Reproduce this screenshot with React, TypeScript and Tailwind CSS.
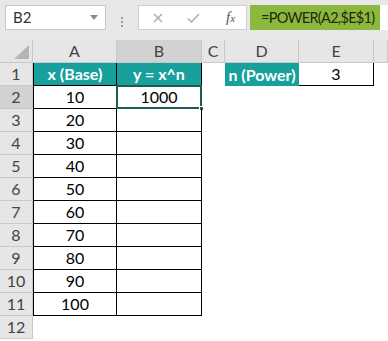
import type { ReactNode } from 'react'

const cols = ['A', 'B', 'C', 'D', 'E', '']
const values = ['10', '20', '30', '40', '50', '60', '70', '80', '90', '100']

function HeadCell({ children, active }: { children?: ReactNode; active?: boolean }) {
  return (
    <div
      className={`flex items-center justify-center border-r border-b border-[#c9c9c9] text-[16px] text-[#444] ${
        active ? 'bg-[#d2d2d2]' : 'bg-[#e6e6e6]'
      }`}
    >
      {children}
    </div>
  )
}

function RowHead({ n, active }: { n: number; active?: boolean }) {
  return (
    <div
      className={`flex items-center justify-center border-r border-b border-[#c9c9c9] text-[16px] text-[#444] ${
        active ? 'bg-[#d2d2d2]' : 'bg-[#e6e6e6]'
      }`}
    >
      {n}
    </div>
  )
}

function FormulaBar() {
  return (
    <div className="flex h-[40px] bg-[#e8e8e8] pt-[5px]">
      <div className="ml-[5px] flex h-[25px] w-[101px] items-center justify-between border border-[#c6c6c6] bg-white pl-[7px] pr-[7px] text-[15px] text-[#333]">
        <span>B2</span>
        <svg width="8" height="5" viewBox="0 0 8 5">
          <path d="M0 0h8L4 5z" fill="#8a8a8a" />
        </svg>
      </div>
      <div className="flex w-[32px] flex-col items-center justify-center gap-[2px] pb-[2px]">
        <span className="h-[2px] w-[2px] bg-[#9a9a9a]" />
        <span className="h-[2px] w-[2px] bg-[#9a9a9a]" />
        <span className="h-[2px] w-[2px] bg-[#9a9a9a]" />
      </div>
      <div className="flex h-[25px] w-[109px] items-center border border-[#d0d0d0] bg-white">
        <svg className="ml-[14px]" width="10" height="10" viewBox="0 0 10 10">
          <path d="M1 1l8 8M9 1l-8 8" stroke="#a8a8a8" strokeWidth="1.4" />
        </svg>
        <svg className="ml-[24px]" width="13" height="10" viewBox="0 0 13 10">
          <path d="M1 5.5l3.5 3.5L12 1" stroke="#b0b0b0" strokeWidth="1.6" fill="none" />
        </svg>
        <span className="ml-[26px] font-['Liberation_Serif',serif] text-[15px] italic text-[#555]">
          f<span className="text-[11px]">x</span>
        </span>
      </div>
      <div className="ml-[3px] flex h-[25px] w-[130px] items-center bg-[#8cb83d] pl-[11px] text-[14.5px] tracking-[-0.7px] text-[#1d2a10]">
        =POWER(A2,$E$1)
      </div>
      <div className="h-[25px] flex-1 bg-white" />
    </div>
  )
}

export default function App() {
  return (
    <div className="h-[341px] w-[388px] overflow-hidden bg-white font-['Lato',sans-serif]">
      <FormulaBar />
      <div className="grid grid-cols-[33px_84px_85px_23px_74px_75px_1fr] grid-rows-[23px_repeat(12,23px)]">
        <div className="relative border-r border-b border-[#c9c9c9] bg-[#e6e6e6]">
          <svg className="absolute right-[3px] bottom-[3px]" width="15" height="14" viewBox="0 0 15 14">
            <path d="M15 0v14H0z" fill="#b5b5b5" />
          </svg>
        </div>
        {cols.map((c, i) => (
          <HeadCell key={i} active={c === 'B'}>
            {c}
          </HeadCell>
        ))}

        <RowHead n={1} />
        <div className="flex items-center justify-center border-r border-b border-l border-black bg-[#17a09c] text-[16px] font-bold text-white">
          x (Base)
        </div>
        <div className="flex items-center justify-center border-r border-b border-black bg-[#17a09c] text-[16px] font-bold text-white">
          y = x^n
        </div>
        <div />
        <div className="flex items-center justify-center bg-[#17a09c] text-[16px] font-bold text-white">
          n (Power)
        </div>
        <div className="flex items-center justify-center border-r border-b border-black text-[16px] text-black">
          3
        </div>
        <div />

        {values.map((v, i) => (
          <Row key={v} n={i + 2} value={v} selected={i === 0} />
        ))}

        <RowHead n={12} />
        <div />
        <div />
        <div />
        <div />
        <div />
        <div />
      </div>
    </div>
  )
}

function Row({ n, value, selected }: { n: number; value: string; selected: boolean }) {
  return (
    <>
      <RowHead n={n} active={selected} />
      <div className="flex items-center justify-center border-r border-b border-l border-black text-[16px] text-black">
        {value}
      </div>
      <div className="relative flex items-center justify-center border-r border-b border-black text-[16px] text-black">
        {selected ? '1000' : ''}
        {selected && (
          <>
            <div className="absolute -top-[1px] -left-[1px] -right-[1px] -bottom-[1px] border-2 border-[#1f5c50]" />
            <div className="absolute -right-[3px] -bottom-[3px] h-[5px] w-[5px] border border-white bg-[#1f5c50]" />
          </>
        )}
      </div>
      <div />
      <div />
      <div />
      <div />
    </>
  )
}
